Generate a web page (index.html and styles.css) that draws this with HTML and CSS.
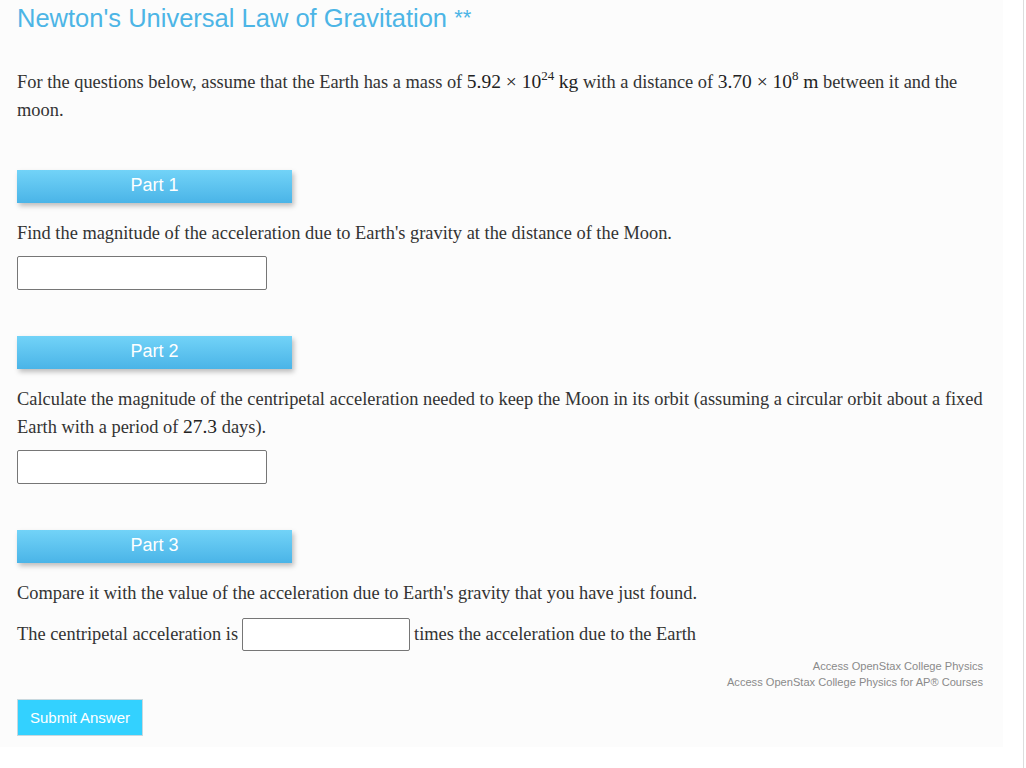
FILE: index.html
```html
<!DOCTYPE html>
<html>
<head>
<meta charset="utf-8">
<link rel="stylesheet" href="styles.css">
</head>
<body>
<div class="panel">
  <h1 class="title">Newton's Universal Law of Gravitation <span class="stars">**</span></h1>
  <p class="intro">For the questions below, assume that the Earth has a mass of <span class="math">5.92 × 10<sup>24</sup></span> <span class="math">kg</span> with a distance of <span class="math">3.70 × 10<sup>8</sup></span> <span class="math">m</span> between it and the moon.</p>

  <div class="part">Part 1</div>
  <p class="q">Find the magnitude of the acceleration due to Earth's gravity at the distance of the Moon.</p>
  <input class="answer" type="text">

  <div class="part">Part 2</div>
  <p class="q">Calculate the magnitude of the centripetal acceleration needed to keep the Moon in its orbit (assuming a circular orbit about a fixed Earth with a period of <span class="math">27.3</span> days).</p>
  <input class="answer" type="text">

  <div class="part">Part 3</div>
  <p class="q">Compare it with the value of the acceleration due to Earth's gravity that you have just found.</p>
  <p class="inline-q">The centripetal acceleration is <input class="answer small" type="text"> times the acceleration due to the Earth</p>

  <div class="links">
    <a href="#">Access OpenStax College Physics</a>
    <a href="#">Access OpenStax College Physics for AP® Courses</a>
  </div>

  <button class="submit" type="button">Submit Answer</button>
</div>
<div class="rail"></div>
</body>
</html>
```
FILE: styles.css
```css
html, body {
  margin: 0;
  padding: 0;
  background: #ffffff;
}
body {
  display: flex;
  align-items: flex-start;
  height: 768px;
  overflow: hidden;
}
.panel {
  width: 1003px;
  height: 747px;
  box-sizing: border-box;
  background: #fcfcfc;
  padding: 0 17px;
  font-family: "Liberation Serif", "Times New Roman", serif;
  font-size: 18.4px;
  color: #333333;
}
.rail {
  width: 1px;
  height: 768px;
  margin-left: 20px;
  background: #dddddd;
}
.title {
  margin: 0;
  padding-top: 3px;
  font-family: "Liberation Sans", Arial, sans-serif;
  font-weight: normal;
  font-size: 25.5px;
  line-height: 30px;
  color: #4cb5e6;
}
.stars {
  font-size: 22px;
  vertical-align: top;
}
.intro {
  margin: 35px 0 0;
  line-height: 28px;
}
.math {
  font-family: "Liberation Serif", "Times New Roman", serif;
  font-size: 19.5px;
  color: #222222;
}
.math sup {
  font-size: 13px;
  line-height: 0;
  vertical-align: 8px;
}
.part {
  width: 275px;
  height: 33px;
  margin-top: 46px;
  background: linear-gradient(to bottom, #72d3f8, #4ab4e7);
  box-shadow: 2px 3px 5px rgba(0, 0, 0, 0.25);
  color: #ffffff;
  font-family: "Liberation Sans", Arial, sans-serif;
  font-size: 18px;
  line-height: 31px;
  text-align: center;
}
.q {
  margin: 16px 0 0;
  line-height: 28px;
}
.answer {
  display: block;
  width: 250px;
  height: 34px;
  box-sizing: border-box;
  margin-top: 9px;
  border: 1px solid #767676;
  border-radius: 2px;
  background: #ffffff;
  padding: 0 4px;
  font-size: 16px;
}
.inline-q {
  margin: 10px 0 0;
  line-height: 34px;
  display: flex;
  align-items: center;
  gap: 4px;
}
.answer.small {
  display: inline-block;
  width: 168px;
  height: 33px;
  margin: 0;
}
.links {
  display: flex;
  flex-direction: column;
  align-items: flex-end;
  margin-top: 7px;
  padding-right: 3px;
  font-family: "Liberation Sans", Arial, sans-serif;
  font-size: 11.1px;
  line-height: 16px;
}
.links a {
  color: #8a8a8a;
  text-decoration: none;
}
.submit {
  display: block;
  margin-top: 9px;
  width: 126px;
  height: 37px;
  background: #33d1ff;
  border: 1px solid #c8d8de;
  color: #ffffff;
  font-family: "Liberation Sans", Arial, sans-serif;
  font-size: 15px;
  padding: 0;
  cursor: pointer;
}
```
